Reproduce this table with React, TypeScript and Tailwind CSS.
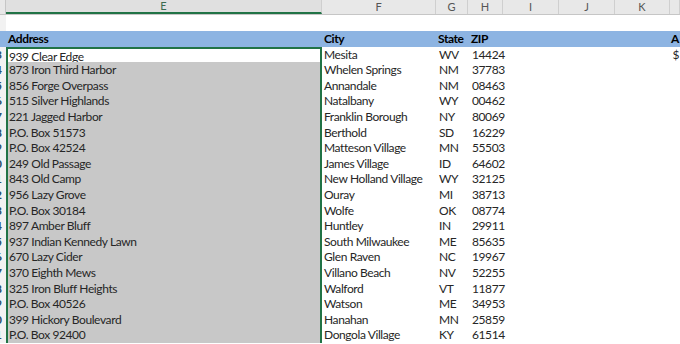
import React from "react";

const rows: [string, string, string, string][] = [
  ["939 Clear Edge", "Mesita", "WV", "14424"],
  ["873 Iron Third Harbor", "Whelen Springs", "NM", "37783"],
  ["856 Forge Overpass", "Annandale", "NM", "08463"],
  ["515 Silver Highlands", "Natalbany", "WY", "00462"],
  ["221 Jagged Harbor", "Franklin Borough", "NY", "80069"],
  ["P.O. Box 51573", "Berthold", "SD", "16229"],
  ["P.O. Box 42524", "Matteson Village", "MN", "55503"],
  ["249 Old Passage", "James Village", "ID", "64602"],
  ["843 Old Camp", "New Holland Village", "WY", "32125"],
  ["956 Lazy Grove", "Ouray", "MI", "38713"],
  ["P.O. Box 30184", "Wolfe", "OK", "08774"],
  ["897 Amber Bluff", "Huntley", "IN", "29911"],
  ["937 Indian Kennedy Lawn", "South Milwaukee", "ME", "85635"],
  ["670 Lazy Cider", "Glen Raven", "NC", "19967"],
  ["370 Eighth Mews", "Villano Beach", "NV", "52255"],
  ["325 Iron Bluff Heights", "Walford", "VT", "11877"],
  ["P.O. Box 40526", "Watson", "ME", "34953"],
  ["399 Hickory Boulevard", "Hanahan", "MN", "25859"],
  ["P.O. Box 92400", "Dongola Village", "KY", "61514"],
];

const letters = [
  { l: "E", w: "w-[316px]" },
  { l: "F", w: "w-[114px]" },
  { l: "G", w: "w-[32px]" },
  { l: "H", w: "w-[35px]" },
  { l: "I", w: "w-[56px]" },
  { l: "J", w: "w-[56px]" },
  { l: "K", w: "w-[55px]" },
  { l: "", w: "flex-1" },
];

export default function App() {
  return (
    <div
      className="w-[680px] h-[344px] overflow-hidden bg-white text-[#262626] text-[12px] tracking-[-0.4px]"
      style={{ fontFamily: "Lato, 'Open Sans', sans-serif" }}
    >
      {/* column letters */}
      <div className="flex h-[15px] bg-[#e8e8e8] border-b border-[#c6c6c6] text-[11px] text-[#555] tracking-normal">
        <div className="w-[6px] border-r border-[#c6c6c6]" />
        {letters.map((c, i) => (
          <div
            key={i}
            className={`${c.w} flex items-center justify-center border-r border-[#cfcfcf] ${
              c.l === "E" ? "bg-[#e0e0e0] text-[#3a6b50] border-b-2 border-b-[#217346]" : ""
            }`}
          >
            {c.l}
          </div>
        ))}
      </div>

      {/* blank row */}
      <div className="flex h-[16px]">
        <div className="w-[6px] bg-[#f2f2f2]" />
      </div>

      {/* header row */}
      <div className="flex h-[15.6px] bg-[#8db4e2] font-bold text-black leading-[15.6px]">
        <div className="w-[6px]" />
        <div className="w-[316px] pl-[2px]">Address</div>
        <div className="w-[114px] pl-[2px]">City</div>
        <div className="w-[32px] pl-[2px]">State</div>
        <div className="w-[35px] pl-[3px]">ZIP</div>
        <div className="flex-1 flex justify-end">
          <span className="pr-[1px]">A</span>
        </div>
      </div>

      {/* data */}
      {rows.map((r, i) => (
        <div key={i} className="flex h-[15.6px] leading-[15px]">
          <div className="w-[6px] bg-[#f2f2f2] overflow-hidden flex justify-start text-[#2b4d6b] font-bold">
            <span className="ml-[-5px]">{(i + 3) % 10}</span>
          </div>
          <div
            className={`w-[316px] pl-[1px] border-x-2 border-[#217346] whitespace-nowrap ${
              i === 0 ? "bg-white border-t-2" : "bg-[#c8c8c8]"
            }`}
          >
            {r[0]}
          </div>
          <div className="w-[114px] pl-[2px] whitespace-nowrap">{r[1]}</div>
          <div className="w-[32px] pl-[3px]">{r[2]}</div>
          <div className="w-[35px] pl-[4px]">{r[3]}</div>
          <div className="flex-1 flex justify-end">
            {i === 0 && <span className="pr-[1px]">$</span>}
          </div>
        </div>
      ))}
    </div>
  );
}
